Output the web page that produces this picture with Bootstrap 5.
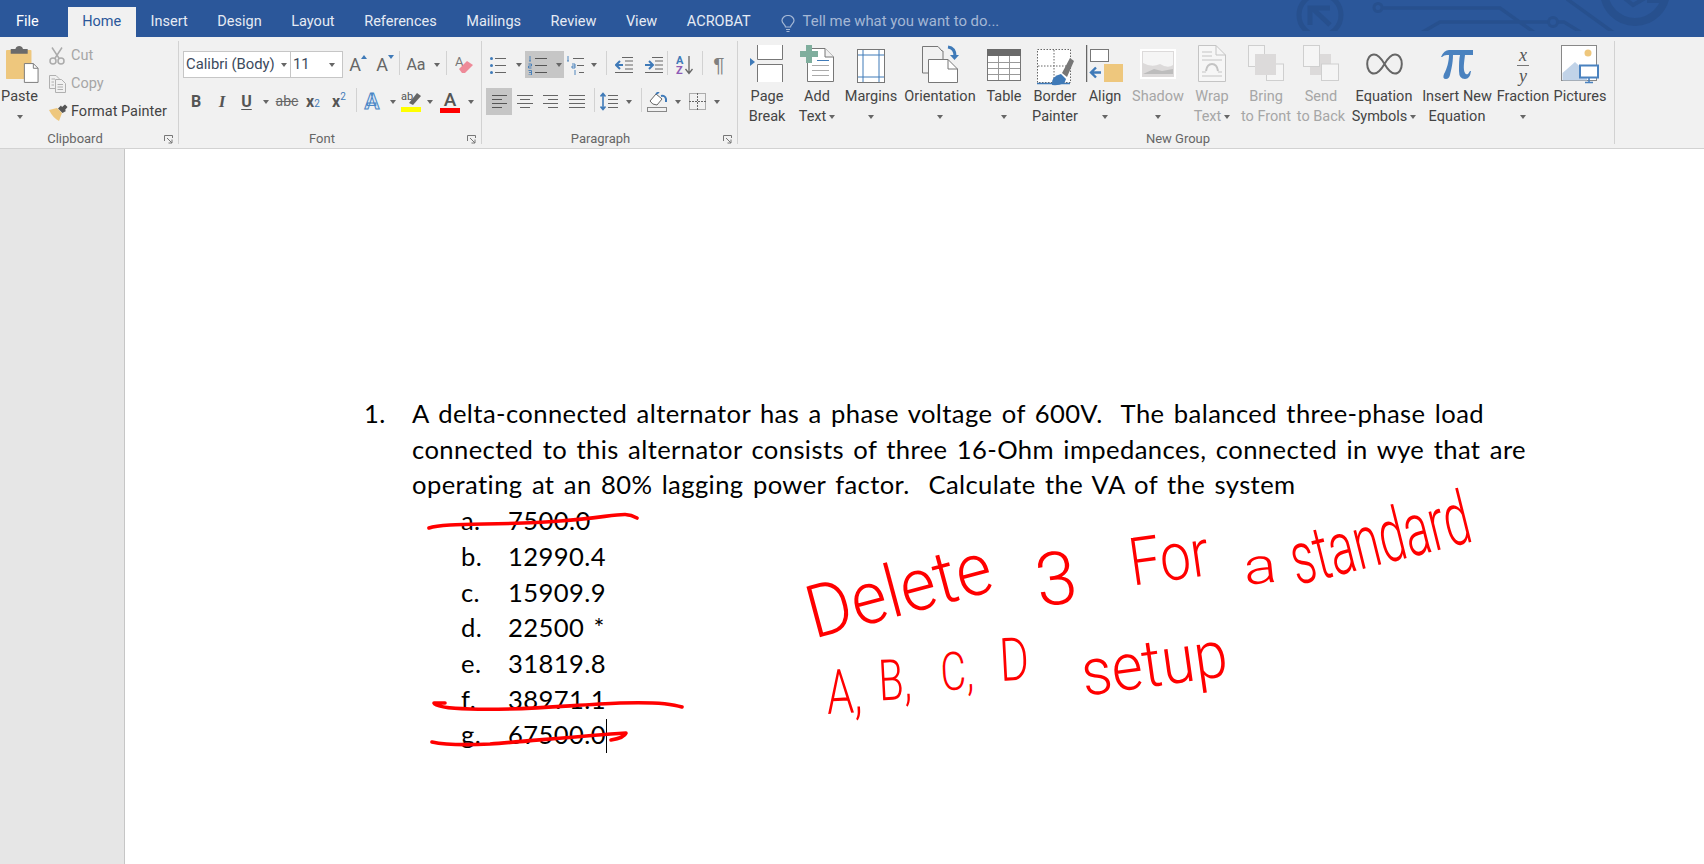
<!DOCTYPE html>
<html lang="en">
<head>
<meta charset="UTF-8">
<meta name="viewport" content="width=device-width, initial-scale=1.0">
<title>Word - Home ribbon</title>
<link rel="stylesheet" href="https://cdn.jsdelivr.net/npm/bootstrap@5.3.0/dist/css/bootstrap.min.css">
<style>
html, body { height: 100%; }
body { width: 1704px; height: 864px; overflow: hidden; background: #fff; font-family: Roboto, "Open Sans", sans-serif; font-size: 14.5px; color: #444; }

/* title bar and tabs */
.tb-bar { height: 37px; background: #2b579a; position: relative; overflow: hidden; }
.tb-tab { height: 30px; margin-top: 7px; padding: 0 14.8px; line-height: 29px; color: #e6ebf4; white-space: nowrap; position: relative; z-index: 1; }
.tb-file { padding: 0 15px 0 16px; color: #fff; }
.tb-home { background: #f1f1f1; color: #2b579a; padding: 0 13.5px; margin-left: 14px; width: 68px; text-align: center; }
.tb-tell { margin-top: 7px; margin-left: 15px; line-height: 29px; color: #a5b8d5; font-size: 14.9px; }
.tb-art { position: absolute; left: 1280px; top: 0; }

/* ribbon */
.rb { height: 112px; background: #f1f1f1; border-bottom: 1px solid #d2d2d2; }
.rb-group { height: 103px; margin-top: 4px; border-right: 1px solid #d2d2d2; flex: none; position: relative; }
.rb-clip { width: 179px; }
.rb-font { width: 303px; padding: 10px 0 0 4px; }
.rb-para { width: 256px; padding: 10px 0 0 0; }
.rb-new { width: 877px; padding: 0 0 0 4px; }
.rb-label { height: 14px; line-height: 14px; font-size: 13px; color: #666; text-align: center; margin-top: auto; margin-bottom: -2px; }
.rb-pl28 { padding-right: 28px; }
.rb-pl20 { padding-right: 20px; }
.rb-pl18 { padding-right: 18px; }
.rb-launch { position: absolute; right: 5px; bottom: 0; }
.rb-row { height: 27px; }
.rb-row + .rb-row { margin-top: 10px; }
.rb-cell { display: flex; align-items: center; justify-content: center; flex: none; height: 27px; overflow: visible; white-space: nowrap; }
.rb-sep { width: 1px; height: 24px; background: #d2d2d2; flex: none; }
.rb-caret { width: 0; height: 0; border-left: 3.5px solid transparent; border-right: 3.5px solid transparent; border-top: 4px solid #666; flex: none; display: inline-block; }
.rb-on { background: #c6c6c6; }
.c2 { width: 2px; } .c3 { width: 3px; } .c6 { width: 6px; } .c4 { width: 4px; } .c12 { width: 12px; } .c14 { width: 14px; } .c16 { width: 16px; } .c18 { width: 18px; }
.c22 { width: 22px; } .c23 { width: 23px; } .c24 { width: 24px; } .c25 { width: 25px; } .c26 { width: 26px; } .c27 { width: 27px; } .c28 { width: 28px; }
.c30 { width: 30px; } .c31 { width: 31px; } .c32 { width: 32px; } .c33 { width: 33px; } .c34 { width: 34px; } .c39 { width: 39px; } .c46 { width: 46px; }

/* clipboard */
.cb-paste { width: 42px; padding-right: 3px; flex: none; }
.cb-icon { height: 46px; padding-left: 6px; align-items: center; display: flex; }
.cb-list { margin-left: 7px; padding-top: 1px; }
.cb-item { height: 28px; line-height: 28px; }
.cb-off { color: #a6a6a6; }
.cb-ic { width: 22px; flex: none; }

/* font controls */
.fc-combo { width: 108px; height: 27px; background: #fff; border: 1px solid #c6c6c6; flex: none; padding: 0 3px 0 2px; line-height: 25px; color: #3c4a5c; font-size: 14.8px; }
.fc-combo + .fc-size { margin-left: -1px; width: 53px; }
.fc-a { font-size: 18px; color: #666; line-height: 1; position: relative; }
.fc-aa { font-size: 16px; }
.fc-bold { font-weight: 700; font-size: 16px; color: #555; }
.fc-it { font-family: "Liberation Serif", serif; font-style: italic; font-weight: 700; font-size: 17px; color: #555; }
.fc-un { font-weight: 700; font-size: 16px; color: #555; text-decoration: underline; text-underline-offset: 2px; }
.fc-abc { font-size: 14px; color: #666; text-decoration: line-through; }
.fc-sub { font-size: 16px; font-weight: 700; color: #555; }
.fc-sub sub, .fc-sub sup { font-size: 10px; font-weight: 400; color: #3f7ab8; }
.fc-outline { font-size: 22px; font-weight: 700; color: #dbe7f4; -webkit-text-stroke: 1px #4a86c5; line-height: 1; }
.fc-colour { font-size: 19px; font-weight: 500; color: #555; line-height: 17px; border-bottom: 5px solid #f00; width: 20px; text-align: center; }
.fc-pil { font-size: 21px; color: #808080; font-family: "Liberation Sans", sans-serif; }

/* big buttons */
.bb { display: flex; flex-direction: column; align-items: center; flex: none; white-space: nowrap; line-height: 20px; }
.bb-icon { height: 46px; padding-top: 4px; display: flex; align-items: flex-start; justify-content: center; }
.bb-off { color: #a6a6a6; }
.bb-line { display: flex; align-items: center; gap: 3px; height: 20px; }
.bb50 { width: 50px; } .bb58 { width: 58px; } .bb80 { width: 80px; } .bb48 { width: 48px; } .bb54 { width: 54px; } .bb46 { width: 46px; }
.bb60 { width: 60px; } .bb76 { width: 76px; } .bb70 { width: 70px; } .bb62 { width: 62px; } .bb52 { width: 52px; }
.bb-frac { font-family: "Liberation Serif", serif; font-style: italic; font-size: 18px; line-height: 20px; color: #555; text-align: center; }
.bb-frac div:first-child { border-bottom: 1px solid #777; width: 12px; }

/* document */
.dc-area { height: 715px; position: relative; }
.dc-side { width: 125px; background: #e6e6e6; border-right: 1px solid #c6c6c6; flex: none; }
.dc-page { padding: 247px 0 0 239px; font-family: Lato, "Liberation Sans", sans-serif; font-size: 25.6px; letter-spacing: .4px; word-spacing: 2.4px; line-height: 35.7px; color: #000; white-space: nowrap; flex: 1; }
.dc-num { width: 48px; flex: none; }
.dc-sub { margin-left: 97px; }
.dc-let { width: 47px; flex: none; }
.dc-caret { display: inline-block; width: 1px; height: 34px; background: #000; vertical-align: -9px; }
.dc-ink { position: absolute; left: 0; top: -149px; pointer-events: none; }

/* handwriting laid over the document */
.hw { position: absolute; color: #f00; font-family: Roboto, "Liberation Sans", sans-serif; font-weight: 300; line-height: 1; white-space: nowrap; transform-origin: left bottom; }
.hw-del { left: 817px; top: 431px; font-size: 70px; transform: rotate(-15deg) scale(.98, 1.05); }
.hw-3 { left: 1041px; top: 396px; font-size: 74px; transform: rotate(-8deg); }
.hw-for { left: 1134px; top: 389px; font-size: 58px; transform: rotate(-8deg) scale(.95, 1.15); }
.hw-a { left: 1246px; top: 388px; font-size: 56px; transform: rotate(-6deg) scale(1.1, .9); }
.hw-std { left: 1300px; top: 386px; font-size: 62px; transform: rotate(-14deg) scale(.76, 1.2); }
.hw-ca { left: 828px; top: 513px; font-size: 62px; transform: rotate(-3deg) scale(.7, 1); }
.hw-cb { left: 880px; top: 501px; font-size: 60px; transform: rotate(-3deg) scale(.68, .95); }
.hw-cc { left: 942px; top: 494px; font-size: 56px; transform: rotate(-3deg) scale(.7, .95); }
.hw-cd { left: 1001px; top: 482px; font-size: 60px; transform: rotate(-3deg) scale(.75, 1); }
.hw-set { left: 1086px; top: 498px; font-size: 60px; transform: rotate(-8deg) scale(1, 1.1); }
</style>
</head>
<body>

<div class="tb-bar d-flex">
  <div class="tb-tab tb-file">File</div>
  <div class="tb-tab tb-home">Home</div>
  <div class="tb-tab">Insert</div>
  <div class="tb-tab">Design</div>
  <div class="tb-tab">Layout</div>
  <div class="tb-tab">References</div>
  <div class="tb-tab">Mailings</div>
  <div class="tb-tab">Review</div>
  <div class="tb-tab">View</div>
  <div class="tb-tab">ACROBAT</div>
  <div class="tb-tell d-flex align-items-start gap-2">
    <svg class="mt-2" width="14" height="18" viewBox="0 0 14 18" fill="none" stroke="#a5b8d5" stroke-width="1.2"><path d="M4.5 12 C4.5 9.5 1 8.5 1 5.5 A6 5 0 0 1 13 5.5 C13 8.5 9.5 9.5 9.5 12 Z"/><path d="M5 14.5 H9 M5.5 16.5 H8.5"/></svg>
    <span>Tell me what you want to do...</span>
  </div>
  <svg class="tb-art" width="424" height="31" viewBox="0 0 424 31" fill="none" stroke="#27508e" stroke-width="3.5">
    <circle cx="40" cy="15" r="21" stroke-width="5"/>
    <path d="M50 25 L32 8 M30 25 V8 H50" stroke-width="5"/>
    <circle cx="98" cy="7.5" r="4" stroke-width="3"/>
    <path d="M102 8 H220 L255 33 M141 33 L160 22 H268 M278 22 H284 L302 33 M287 -1 L334 33"/>
    <circle cx="273" cy="22" r="4.5" stroke-width="3"/>
    <circle cx="355" cy="-9" r="31" stroke-width="8"/>
    <path d="M343 -3 L353 5 L367 -3 M367 1 H382" stroke-width="4"/>
  </svg>
</div>

<div class="rb d-flex">

  <!-- clipboard -->
  <div class="rb-group rb-clip d-flex flex-column">
    <div class="d-flex">
      <div class="cb-paste text-center">
        <div class="cb-icon">
          <svg width="35" height="39" viewBox="0 0 35 39">
            <rect x="0" y="4" width="27" height="31" rx="1" fill="#eec77d"/>
            <path d="M5 8 V3 H10 Q11 0 14 0 Q17 0 18 3 H23 V8 Z" fill="#6a6a6a"/>
            <path d="M19.5 18.5 H29 L34 23.5 V38.5 H19.5 Z" fill="#fff" stroke="#777"/>
            <path d="M29 18.5 V23.5 H34" fill="none" stroke="#777"/>
          </svg>
        </div>
        <div class="bb-line justify-content-center">Paste</div>
        <div class="bb-line justify-content-center"><span class="rb-caret"></span></div>
      </div>
      <div class="cb-list">
        <div class="cb-item d-flex align-items-center cb-off">
          <span class="cb-ic"><svg width="16" height="18" viewBox="0 0 16 18" fill="none" stroke="#ababab" stroke-width="1.5"><path d="M3 0.5 L10.5 12 M13 0.5 L5.5 12"/><circle cx="4" cy="14" r="3"/><circle cx="12" cy="14" r="3"/></svg></span>Cut
        </div>
        <div class="cb-item d-flex align-items-center cb-off">
          <span class="cb-ic"><svg width="17" height="18" viewBox="0 0 17 18" fill="#f1f1f1" stroke="#b0b0b0"><path d="M.5 .5 H7 L10 3.5 V13.5 H.5 Z"/><path d="M6.5 4.5 H12.5 L16.5 8.5 V17.5 H6.5 Z"/><path d="M2.5 4 H6 M2.5 7 H5 M2.5 10 H5 M8.5 9.5 H14 M8.5 12 H14 M8.5 14.5 H14" fill="none"/></svg></span>Copy
        </div>
        <div class="cb-item d-flex align-items-center">
          <span class="cb-ic"><svg width="19" height="17" viewBox="0 0 19 17"><path d="M0 6 L8 4 L13 9 L10 17 Q4 14 0 6 Z" fill="#eec77d"/><path d="M9 4.5 L12 1.5 L13 3 L16 .5 L18.5 3 L16 6 L17 7 L13.5 9 Z" fill="#555"/></svg></span>Format Painter
        </div>
      </div>
    </div>
    <div class="rb-label rb-pl28">Clipboard</div>
    <svg class="rb-launch" width="9" height="9" viewBox="0 0 9 9" fill="none" stroke="#777"><path d="M.5 6 V.5 H8.5 V3"/><path d="M3 3 L8 8 M8 4.5 V8 H4.5"/></svg>
  </div>

  <!-- font -->
  <div class="rb-group rb-font d-flex flex-column">
    <div class="rb-row d-flex">
      <div class="fc-combo d-flex align-items-center justify-content-between"><span>Calibri (Body)</span><span class="rb-caret"></span></div>
      <div class="fc-combo fc-size d-flex align-items-center justify-content-between"><span>11</span><span class="rb-caret me-1"></span></div>
      <div class="rb-cell c30"><span class="fc-a">A</span><svg class="mb-3" width="6" height="4"><path d="M0 4 L3 0 L6 4 Z" fill="#3f7ab8"/></svg></div>
      <div class="rb-cell c24"><span class="fc-a">A</span><svg class="mb-3" width="6" height="4"><path d="M0 0 L3 4 L6 0 Z" fill="#3f7ab8"/></svg></div>
      <div class="rb-cell c2"></div><div class="rb-sep"></div>
      <div class="rb-cell c46 gap-2"><span class="fc-a fc-aa">Aa</span><span class="rb-caret"></span></div>
      <div class="rb-sep"></div>
      <div class="rb-cell c34">
        <svg width="18" height="20" viewBox="0 0 18 20"><text x="0" y="11" font-family="Roboto" font-size="13" fill="#777">A</text><path d="M4 14 L12 6 L18 10 L10 18 H7 Z" fill="#ee8a98"/></svg>
      </div>
    </div>
    <div class="rb-row d-flex">
      <div class="rb-cell c26 fc-bold">B</div>
      <div class="rb-cell c26 fc-it">I</div>
      <div class="rb-cell c23 fc-un">U</div>
      <div class="rb-cell c16"><span class="rb-caret"></span></div>
      <div class="rb-cell c26 fc-abc">abc</div>
      <div class="rb-cell c26 fc-sub">x<sub>2</sub></div>
      <div class="rb-cell c26 fc-sub">x<sup>2</sup></div>
      <div class="rb-cell c4"></div><div class="rb-sep"></div>
      <div class="rb-cell c30 fc-outline">A</div>
      <div class="rb-cell c12"><span class="rb-caret"></span></div>
      <div class="rb-cell c24">
        <svg width="21" height="21" viewBox="0 0 21 21"><text x="0" y="9" font-family="Roboto" font-size="11" fill="#555">ab</text><path d="M8 12 L16 2 L20 5 L12 14 Z" fill="#666"/><rect y="16" width="20" height="5" fill="#ff0"/></svg>
      </div>
      <div class="rb-cell c14"><span class="rb-caret"></span></div>
      <div class="rb-cell c26"><span class="fc-colour">A</span></div>
      <div class="rb-cell c16"><span class="rb-caret"></span></div>
    </div>
    <div class="rb-label rb-pl20">Font</div>
    <svg class="rb-launch" width="9" height="9" viewBox="0 0 9 9" fill="none" stroke="#777"><path d="M.5 6 V.5 H8.5 V3"/><path d="M3 3 L8 8 M8 4.5 V8 H4.5"/></svg>
  </div>

  <!-- paragraph -->
  <div class="rb-group rb-para d-flex flex-column">
    <div class="rb-row d-flex">
      <div class="rb-cell c31"><svg width="16" height="20" viewBox="0 0 16 20" fill="none" stroke="#666"><path d="M5 3.5 H16 M5 10.5 H16 M5 17.5 H16"/><circle cx="1.5" cy="3.5" r="1.5" fill="#3f7ab8" stroke="none"/><circle cx="1.5" cy="10.5" r="1.5" fill="#3f7ab8" stroke="none"/><circle cx="1.5" cy="17.5" r="1.5" fill="#3f7ab8" stroke="none"/></svg></div>
      <div class="rb-cell c12"><span class="rb-caret"></span></div>
      <div class="rb-cell c39 rb-on gap-2"><svg width="20" height="20" viewBox="0 0 20 20" fill="none" stroke="#555"><path d="M7 3.5 H19 M7 10.5 H19 M7 17.5 H19"/><path d="M2 1 V6 M1 6 H3 M0.5 9 H3.5 V11 H0.5 V13 H3.5 M0.5 15.5 H3.5 V20 H0.5 M1 17.5 H3.5" stroke="#3f7ab8" stroke-width=".9"/></svg><span class="rb-caret"></span></div>
      <div class="rb-cell c24"><svg width="20" height="20" viewBox="0 0 20 20" fill="none" stroke="#666"><path d="M7 3.5 H18 M11 10.5 H18 M13 17.5 H18"/><path d="M2 1 V6 M1 6 H3 M6 9 H9 V13 H6 V11 H9 M9 15 V20" stroke="#3f7ab8" stroke-width=".9"/></svg></div>
      <div class="rb-cell c12"><span class="rb-caret"></span></div>
      <div class="rb-cell c6"></div><div class="rb-sep"></div>
      <div class="rb-cell c33"><svg width="18" height="16" viewBox="0 0 18 16" fill="none" stroke="#666"><path d="M7 .5 H18 M10 4 H18 M10 8 H18 M10 12 H18 M0 15.5 H18"/><path d="M8 8 H1 M5 4 L1 8 L5 12" stroke="#3f7ab8" stroke-width="2"/></svg></div>
      <div class="rb-cell c27"><svg width="18" height="16" viewBox="0 0 18 16" fill="none" stroke="#666"><path d="M7 .5 H18 M10 4 H18 M10 8 H18 M10 12 H18 M0 15.5 H18"/><path d="M0 8 H8 M4 4 L8 8 L4 12" stroke="#3f7ab8" stroke-width="2"/></svg></div>
      <div class="rb-sep"></div>
      <div class="rb-cell c34"><svg width="18" height="24" viewBox="0 0 18 24"><text x="0" y="11" font-family="Roboto" font-size="11" font-weight="700" fill="#3f7ab8">A</text><text x="0" y="21" font-family="Roboto" font-size="11" font-weight="700" fill="#8e5bb5">Z</text><path d="M13 3 V20 M9.5 16 L13 20.5 L16.5 16" fill="none" stroke="#666" stroke-width="1.3"/></svg></div>
      <div class="rb-sep"></div>
      <div class="rb-cell c32 fc-pil">¶</div>
    </div>
    <div class="rb-row d-flex">
      <div class="rb-cell c4"></div>
      <div class="rb-cell c26 rb-on"><svg width="15" height="13" viewBox="0 0 15 13" fill="none" stroke="#555"><path d="M0 .5 H15 M0 4.5 H10 M0 8.5 H15 M0 12.5 H10"/></svg></div>
      <div class="rb-cell c26"><svg width="16" height="13" viewBox="0 0 16 13" fill="none" stroke="#666"><path d="M0 .5 H16 M3 4.5 H13 M0 8.5 H16 M3 12.5 H13"/></svg></div>
      <div class="rb-cell c25"><svg width="15" height="13" viewBox="0 0 15 13" fill="none" stroke="#666"><path d="M0 .5 H15 M5 4.5 H15 M0 8.5 H15 M5 12.5 H15"/></svg></div>
      <div class="rb-cell c28"><svg width="16" height="13" viewBox="0 0 16 13" fill="none" stroke="#666"><path d="M0 .5 H16 M0 4.5 H16 M0 8.5 H16 M0 12.5 H16"/></svg></div>
      <div class="rb-cell c3"></div><div class="rb-sep"></div>
      <div class="rb-cell c28"><svg width="18" height="19" viewBox="0 0 18 19" fill="none" stroke="#666"><path d="M8 3.5 H18 M8 7.5 H18 M8 11.5 H18 M8 15.5 H18"/><path d="M3 2 V17 M.5 4.5 L3 1.5 L5.5 4.5 M.5 14.5 L3 17.5 L5.5 14.5" stroke="#3f7ab8" stroke-width="1.6"/></svg></div>
      <div class="rb-cell c12"><span class="rb-caret"></span></div>
      <div class="rb-cell c6"></div><div class="rb-sep"></div>
      <div class="rb-cell c30"><svg width="20" height="20" viewBox="0 0 20 20"><path d="M3 9 L9 2 L15 7 L10 13 Q5 13 3 9 Z" fill="#fff" stroke="#666"/><path d="M9 2 L12 0 M14 4 Q18 3 19 7 L19 10" fill="none" stroke="#3f7ab8" stroke-width="2"/><rect x=".5" y="15.5" width="19" height="4" fill="#f1f1f1" stroke="#888"/></svg></div>
      <div class="rb-cell c12"><span class="rb-caret"></span></div>
      <div class="rb-cell c26"><svg width="17" height="17" viewBox="0 0 17 17" fill="none" stroke="#666" stroke-dasharray="1 1"><rect x=".5" y=".5" width="16" height="16"/><path d="M8.5 0 V17 M0 8.5 H17" stroke-dasharray="2 1"/></svg></div>
      <div class="rb-cell c14"><span class="rb-caret"></span></div>
    </div>
    <div class="rb-label rb-pl18">Paragraph</div>
    <svg class="rb-launch" width="9" height="9" viewBox="0 0 9 9" fill="none" stroke="#777"><path d="M.5 6 V.5 H8.5 V3"/><path d="M3 3 L8 8 M8 4.5 V8 H4.5"/></svg>
  </div>

  <!-- new group -->
  <div class="rb-group rb-new d-flex flex-column">
    <div class="d-flex">
      <div class="bb bb50">
        <div class="bb-icon"><svg width="34" height="37" viewBox="0 0 34 37"><path d="M7.5 0 V14.5 H32.5 V0" fill="#fff" stroke="#777"/><path d="M7.5 37 V19.5 H32.5 V37" fill="#fff" stroke="#777"/><path d="M0 13 L5 17 L0 21 Z" fill="#3f7ab8"/></svg></div>
        <div>Page</div><div>Break</div>
      </div>
      <div class="bb bb50">
        <div class="bb-icon"><svg width="34" height="38" viewBox="0 0 34 38"><path d="M7.5 3.5 H25 L33.5 12 V36.5 H7.5 Z" fill="#fff" stroke="#777"/><path d="M25 3.5 V12 H33.5" fill="#f1f1f1" stroke="#777"/><path d="M17 15.5 H29 M12 20.5 H29 M12 25.5 H29 M12 30.5 H29" stroke="#aaa"/><path d="M17 15.5 H29" stroke="#3f7ab8"/><path d="M6 0 H12 V6 H18 V12 H12 V18 H6 V12 H0 V6 H6 Z" fill="#7fae9d"/></svg></div>
        <div>Add</div><div class="bb-line">Text <span class="rb-caret"></span></div>
      </div>
      <div class="bb bb58">
        <div class="bb-icon"><svg class="mt-1" width="28" height="34" viewBox="0 0 28 34" fill="#fff"><rect x=".5" y=".5" width="27" height="33" stroke="#777"/><path d="M6 1 V33 M22 1 V33 M1 6 H27 M1 28 H27" fill="none" stroke="#3f7ab8"/></svg></div>
        <div>Margins</div><div class="bb-line"><span class="rb-caret"></span></div>
      </div>
      <div class="bb bb80">
        <div class="bb-icon"><svg width="37" height="38" viewBox="0 0 37 38"><path d="M.5 1.5 H16 L20 6 H21 V28 H.5 Z" fill="#f1f1f1" stroke="#777"/><path d="M6.5 14.5 H26 L35.5 24 V37.5 H6.5 Z" fill="#fff" stroke="#777"/><path d="M26 14.5 V24 H35.5" fill="none" stroke="#777"/><path d="M26 2 Q33 3 33 11" fill="none" stroke="#3f7ab8" stroke-width="3"/><path d="M28 10 H37 L32.5 15 Z" fill="#3f7ab8"/></svg></div>
        <div>Orientation</div><div class="bb-line"><span class="rb-caret"></span></div>
      </div>
      <div class="bb bb48">
        <div class="bb-icon"><svg class="mt-1" width="34" height="32" viewBox="0 0 34 32" fill="none" stroke="#999"><rect x=".5" y=".5" width="33" height="31" fill="#fff" stroke="#777"/><rect width="34" height="7" fill="#6a6a6a" stroke="none"/><path d="M1 13.5 H33 M1 19.5 H33 M1 25.5 H33 M11.5 7 V31 M22.5 7 V31"/></svg></div>
        <div>Table</div><div class="bb-line"><span class="rb-caret"></span></div>
      </div>
      <div class="bb bb54">
        <div class="bb-icon"><svg class="mt-1" width="37" height="37" viewBox="0 0 37 37"><g fill="#fff" stroke="#666" stroke-dasharray="1.5 1.5"><rect x=".5" y=".5" width="33" height="33"/><path d="M17 1 V33 M1 17 H33" fill="none"/></g><path d="M0 34.5 H33" stroke="#3f7ab8" stroke-width="1.5"/><path d="M15 36 Q14 27 24 25 L29 30 Q28 37 15 36 Z" fill="#3f7ab8"/><path d="M25 24 L33 9 L37 12 L30 28 Z" fill="#777"/></svg></div>
        <div>Border</div><div>Painter</div>
      </div>
      <div class="bb bb46">
        <div class="bb-icon"><svg width="38" height="37" viewBox="0 0 38 37"><path d="M.5 0 V37" stroke="#666" stroke-width="1.5"/><rect x="4.5" y="4.5" width="18" height="12" fill="#fff" stroke="#777"/><rect x="18" y="19" width="19" height="18" fill="#eec77d"/><path d="M15 27.5 H6 M10 22.5 L5 27.5 L10 32.5" fill="none" stroke="#3f7ab8" stroke-width="2.4"/></svg></div>
        <div>Align</div><div class="bb-line"><span class="rb-caret"></span></div>
      </div>
      <div class="bb bb60 bb-off">
        <div class="bb-icon"><svg class="mt-1" width="36" height="30" viewBox="0 0 36 30"><rect x="1" y="1" width="34" height="28" fill="#dcdada" stroke="#fff" stroke-width="2"/><path d="M3 3 H33 V16 Q28 20 20 15 Q12 19 3 14 Z" fill="#f5f5f5"/><path d="M3 25 L14 20 L22 22 L33 20 V25 Z" fill="#bdbdbd"/></svg></div>
        <div>Shadow</div><div class="bb-line"><span class="rb-caret"></span></div>
      </div>
      <div class="bb bb48 bb-off">
        <div class="bb-icon"><svg width="28" height="37" viewBox="0 0 28 37" fill="none" stroke="#c4c4c4"><path d="M.5 .5 H18 L27.5 10 V36.5 H.5 Z" fill="#f6f6f6"/><path d="M18 .5 V10 H27.5 M4 7 H14 M4 11 H14 M4 15 H24 M4 31 H24 M4 27 H8 M20 27 H24"/><path d="M8 26 Q9 19 14 19 Q19 19 20 26" stroke-width="2"/></svg></div>
        <div>Wrap</div><div class="bb-line">Text <span class="rb-caret"></span></div>
      </div>
      <div class="bb bb60 bb-off">
        <div class="bb-icon"><svg width="36" height="36" viewBox="0 0 36 36"><rect x=".5" y=".5" width="16" height="21" fill="#f5f5f5" stroke="#cfcfcf"/><rect x="18.5" y="19" width="17" height="16.5" fill="#f5f5f5" stroke="#cfcfcf"/><rect x="7" y="9" width="21" height="21" fill="#dcdada"/></svg></div>
        <div>Bring</div><div>to Front</div>
      </div>
      <div class="bb bb50 bb-off">
        <div class="bb-icon"><svg width="36" height="36" viewBox="0 0 36 36"><rect x="7" y="9" width="21" height="21" fill="#dcdada"/><rect x=".5" y=".5" width="16" height="21" fill="#f5f5f5" stroke="#cfcfcf"/><rect x="18.5" y="19" width="17" height="16.5" fill="#f5f5f5" stroke="#cfcfcf"/></svg></div>
        <div>Send</div><div>to Back</div>
      </div>
      <div class="bb bb76">
        <div class="bb-icon"><svg class="mt-2" width="37" height="22" viewBox="0 0 37 22" fill="none" stroke="#666" stroke-width="2"><path d="M18.5 11 C15 5 11 1.5 8 1.5 C4 1.5 1.2 5.5 1.2 11 C1.2 16.5 4 20.5 8 20.5 C11 20.5 15 17 18.5 11 C22 5 25 1.5 29 1.5 C33 1.5 35.8 5.5 35.8 11 C35.8 16.5 33 20.5 29 20.5 C25 20.5 22 17 18.5 11 Z"/></svg></div>
        <div>Equation</div><div class="bb-line">Symbols <span class="rb-caret"></span></div>
      </div>
      <div class="bb bb70">
        <div class="bb-icon"><svg class="mt-1" width="32" height="30" viewBox="0 0 32 30"><path d="M0 8 Q3 1 8 1 H32 V6 H24 C23 14 22 20 24 24 Q25 26 27 25 L29 22 H30 Q29 30 24 30 Q18 30 18 22 C18 15 18 10 19 6 H12 C12 14 10 22 9 26 Q8 30 5 30 Q1 30 3 25 C6 20 8 12 8 6 H6 Q3 6 1 8 Z" fill="#4a82bf"/></svg></div>
        <div>Insert New</div><div>Equation</div>
      </div>
      <div class="bb bb62">
        <div class="bb-icon"><div class="bb-frac d-flex flex-column align-items-center"><div>x</div><div>y</div></div></div>
        <div>Fraction</div><div class="bb-line"><span class="rb-caret"></span></div>
      </div>
      <div class="bb bb52">
        <div class="bb-icon"><svg width="38" height="39" viewBox="0 0 38 39"><rect x=".5" y=".5" width="35" height="35" fill="#fff" stroke="#888"/><circle cx="27" cy="8" r="3.5" fill="#eec77d"/><path d="M1.5 35.5 V28 L14 17 L26 28 V35.5 Z" fill="#c1d3e8"/><rect x="19" y="20.5" width="18" height="12" fill="#fff" stroke="#4a82bf" stroke-width="2"/><path d="M28 33 V37 M24 37.5 H32" stroke="#4a82bf" stroke-width="1.6"/></svg></div>
        <div>Pictures</div>
      </div>
    </div>
    <div class="rb-label">New Group</div>
  </div>
</div>

<div class="dc-area d-flex">
  <div class="dc-side"></div>
  <div class="dc-page">
    <div class="d-flex">
      <div class="dc-num">1.</div>
      <div>A delta-connected alternator has a phase voltage of 600V.&nbsp; The balanced three-phase load<br>connected to this alternator consists of three 16-Ohm impedances, connected in wye that are<br>operating at an 80% lagging power factor.&nbsp; Calculate the VA of the system</div>
    </div>
    <div class="dc-sub">
      <div class="d-flex"><div class="dc-let">a.</div><div>7500.0</div></div>
      <div class="d-flex"><div class="dc-let">b.</div><div>12990.4</div></div>
      <div class="d-flex"><div class="dc-let">c.</div><div>15909.9</div></div>
      <div class="d-flex"><div class="dc-let">d.</div><div>22500 *</div></div>
      <div class="d-flex"><div class="dc-let">e.</div><div>31819.8</div></div>
      <div class="d-flex"><div class="dc-let">f.</div><div>38971.1</div></div>
      <div class="d-flex"><div class="dc-let">g.</div><div>67500.0<span class="dc-caret"></span></div></div>
    </div>
  </div>

  <!-- pen strokes over the answers -->
  <svg class="dc-ink" width="1704" height="864" fill="none" stroke="#f00" stroke-width="3.6" stroke-linecap="round" stroke-linejoin="round">
    <path d="M429 528 C445 522 500 526 560 521 S625 511 637 518"/>
    <path d="M445 703 L434 703 Q436 708 470 709 C520 711 570 705 620 703 C650 702 670 703 682 707"/>
    <path d="M432 742 Q450 746 490 744 C530 741 580 736 626 733 Q624 738 611 740"/>
  </svg>

  <span class="hw hw-del">Delete</span>
  <span class="hw hw-3">3</span>
  <span class="hw hw-for">For</span>
  <span class="hw hw-a">a</span>
  <span class="hw hw-std">standard</span>
  <span class="hw hw-ca">A,</span>
  <span class="hw hw-cb">B,</span>
  <span class="hw hw-cc">C,</span>
  <span class="hw hw-cd">D</span>
  <span class="hw hw-set">setup</span>
</div>

<script src="https://cdn.jsdelivr.net/npm/bootstrap@5.3.0/dist/js/bootstrap.bundle.min.js"></script>
</body>
</html>
